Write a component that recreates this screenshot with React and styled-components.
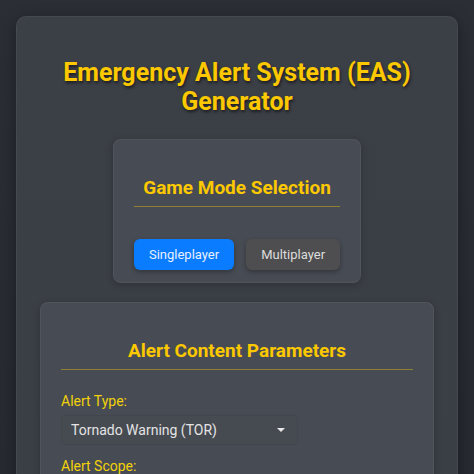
import React from "react";
import styled, { createGlobalStyle } from "styled-components";

const GlobalStyle = createGlobalStyle`
  html, body {
    margin: 0;
    padding: 0;
    background: #2a2d33;
    font-family: "Roboto", "Liberation Sans", sans-serif;
  }
`;

const Page = styled.div`
  padding: 16px;
  min-height: 474px;
  box-sizing: border-box;
  background: linear-gradient(180deg, #2b2e35 0%, #262930 100%);
`;

const MainCard = styled.div`
  background: linear-gradient(180deg, #3b3f46 0%, #3a3e45 100%);
  border: 1px solid rgba(255, 255, 255, 0.06);
  border-radius: 10px;
  padding: 41px 23px 24px;
  box-shadow: 0 4px 16px rgba(0, 0, 0, 0.35);
  display: flex;
  flex-direction: column;
  align-items: center;
`;

const Title = styled.h1`
  margin: 0 0 23px;
  font-size: 25px;
  line-height: 29px;
  font-weight: 700;
  color: #fcc800;
  text-align: center;
  text-shadow: 1px 2px 3px rgba(0, 0, 0, 0.55);
`;

const Section = styled.div`
  background: #474b53;
  border: 1px solid rgba(255, 255, 255, 0.05);
  border-radius: 8px;
  padding: 36px 20px ${(p) => p.bottom || "20px"};
  box-shadow: 0 2px 8px rgba(0, 0, 0, 0.2);
  box-sizing: border-box;
  width: ${(p) => (p.full ? "100%" : "auto")};
  margin-bottom: 19px;
`;

const SectionTitle = styled.h2`
  margin: 0 0 22px;
  padding-bottom: 7px;
  font-size: 19px;
  line-height: 23px;
  font-weight: 700;
  color: #fcc800;
  text-align: center;
  border-bottom: 1px solid rgba(255, 204, 0, 0.4);
`;

const ButtonRow = styled.div`
  display: flex;
  gap: 12px;
  margin-top: 32px;
`;

const ModeButton = styled.button`
  font-family: "Roboto", "Liberation Sans", sans-serif;
  font-size: 13px;
  line-height: 15px;
  padding: 8px 15px;
  border: none;
  border-radius: 6px;
  cursor: pointer;
  color: ${(p) => (p.active ? "#e8f0ff" : "#dcdcdc")};
  background: ${(p) => (p.active ? "#0a7cff" : "#4e4e50")};
  box-shadow: 0 2px 5px rgba(0, 0, 0, 0.3);
`;

const Field = styled.div`
  display: flex;
  flex-direction: column;
  align-items: flex-start;
  margin-bottom: 12px;
`;

const Label = styled.label`
  font-size: 14px;
  line-height: 18px;
  color: #f2d20a;
  margin-bottom: 5px;
`;

const SelectBox = styled.div`
  width: 237px;
  height: 30px;
  box-sizing: border-box;
  display: flex;
  align-items: center;
  justify-content: space-between;
  padding: 0 12px 0 9px;
  background: #464a51;
  border: 1px solid rgba(0, 0, 0, 0.04);
  border-radius: 4px;
  color: #e4e4e4;
  font-size: 14px;
`;

const Caret = styled.span`
  width: 0;
  height: 0;
  border-left: 4px solid transparent;
  border-right: 4px solid transparent;
  border-top: 4px solid #e8e8e8;
`;

export default function App() {
  return (
    <>
      <GlobalStyle />
      <Page>
        <MainCard>
          <Title>
            Emergency Alert System (EAS)
            <br />
            Generator
          </Title>
          <Section bottom="12px">
            <SectionTitle>Game Mode Selection</SectionTitle>
            <ButtonRow>
              <ModeButton active>Singleplayer</ModeButton>
              <ModeButton>Multiplayer</ModeButton>
            </ButtonRow>
          </Section>
          <Section full>
            <SectionTitle>Alert Content Parameters</SectionTitle>
            <Field>
              <Label>Alert Type:</Label>
              <SelectBox>
                <span>Tornado Warning (TOR)</span>
                <Caret />
              </SelectBox>
            </Field>
            <Field>
              <Label>Alert Scope:</Label>
              <SelectBox>
                <span>County</span>
                <Caret />
              </SelectBox>
            </Field>
          </Section>
        </MainCard>
      </Page>
    </>
  );
}
